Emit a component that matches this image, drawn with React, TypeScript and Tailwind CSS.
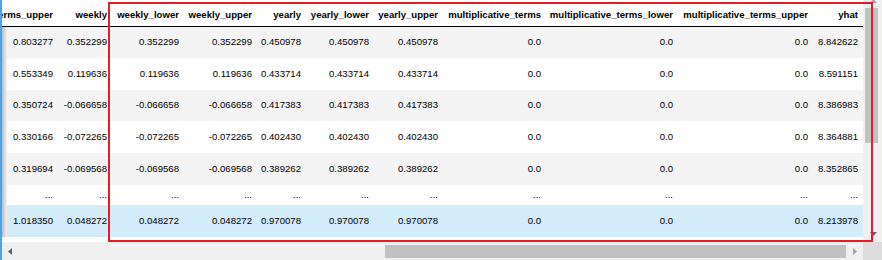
const columns = [
  { name: "additive_terms_upper", width: 58 },
  { name: "weekly", width: 54 },
  { name: "weekly_lower", width: 72 },
  { name: "weekly_upper", width: 73 },
  { name: "yearly", width: 49 },
  { name: "yearly_lower", width: 68 },
  { name: "yearly_upper", width: 69 },
  { name: "multiplicative_terms", width: 103 },
  { name: "multiplicative_terms_lower", width: 132 },
  { name: "multiplicative_terms_upper", width: 135 },
  { name: "yhat", width: 50 },
];

// [additive_upper, weekly(x3), yearly(x3), yhat]
const raw: [string, string, string, string, number, string][] = [
  ["0.803277", "0.352299", "0.450978", "8.842622", 31, "bg-[#f4f4f4]"],
  ["0.553349", "0.119636", "0.433714", "8.591151", 32, "bg-white"],
  ["0.350724", "-0.066658", "0.417383", "8.386983", 31, "bg-[#f4f4f4]"],
  ["0.330166", "-0.072265", "0.402430", "8.364881", 32, "bg-white"],
  ["0.319694", "-0.069568", "0.389262", "8.352865", 32, "bg-[#f4f4f4]"],
  ["...", "...", "...", "...", 20, "bg-white"],
  ["1.018350", "0.048272", "0.970078", "8.213978", 32, "bg-[#d3ecfa]"],
];

const rows = raw.map(([add, wk, yr, yhat, h, bg]) => {
  const zero = add === "..." ? "..." : "0.0";
  return { h, bg, cells: [add, wk, wk, wk, yr, yr, yr, zero, zero, zero, yhat] };
});

function Arrow({ dir, color }: { dir: "up" | "down" | "left" | "right"; color: string }) {
  const pts = {
    up: "0,4 7,4 3.5,0",
    down: "0,0 7,0 3.5,4",
    left: "4,0 4,7 0,3.5",
    right: "0,0 0,7 4,3.5",
  }[dir];
  const vertical = dir === "up" || dir === "down";
  return (
    <svg width={vertical ? 7 : 4} height={vertical ? 4 : 7} viewBox={vertical ? "0 0 7 4" : "0 0 4 7"}>
      <polygon points={pts} fill={color} />
    </svg>
  );
}

export default function App() {
  return (
    <div className="relative w-[882px] h-[260px] overflow-hidden bg-white text-black font-['Liberation_Sans',Arial,sans-serif] text-[9.6px]">
      <div className="flex h-[242px]">
        {/* table viewport */}
        <div className="w-[863px] overflow-hidden">
          <table className="table-fixed border-separate border-spacing-0 w-[863px]">
            <colgroup>
              {columns.map((c) => (
                <col key={c.name} style={{ width: c.width }} />
              ))}
            </colgroup>
            <thead>
              <tr>
                {columns.map((c) => (
                  <th
                    key={c.name}
                    className="h-[27px] pt-[4px] pr-[5px] border-b border-black font-bold text-right align-middle whitespace-nowrap"
                  >
                    <div className="flex justify-end overflow-hidden">{c.name}</div>
                  </th>
                ))}
              </tr>
            </thead>
            <tbody>
              {rows.map((r, i) => (
                <tr key={i} className={r.bg} style={{ height: r.h }}>
                  {r.cells.map((v, j) => (
                    <td key={j} className="pr-[5px] text-right align-middle whitespace-nowrap">
                      {v}
                    </td>
                  ))}
                </tr>
              ))}
            </tbody>
          </table>
        </div>

        {/* vertical scrollbar */}
        <div className="w-[19px] bg-[#f0f0f0] flex flex-col">
          <div className="h-[3px] overflow-hidden flex items-end justify-center pl-[1px]">
            <Arrow dir="up" color="#a3a3a3" />
          </div>
          <div className="mt-[5px] ml-[2px] w-[13px] h-[135px] bg-[#c1c1c1]" />
          <div className="flex-1" />
          <div className="h-[17px] flex items-center justify-center pl-[1px]">
            <Arrow dir="down" color="#606060" />
          </div>
        </div>
      </div>

      {/* horizontal scrollbar */}
      <div className="flex h-[18px] bg-[#f0f0f0]">
        <div className="w-[19px] flex items-center justify-center">
          <Arrow dir="left" color="#606060" />
        </div>
        <div className="flex-1 pt-[3px] pb-[2px] pl-[366px]">
          <div className="h-full bg-[#c1c1c1]" />
        </div>
        <div className="w-[17px] flex items-center justify-center">
          <Arrow dir="right" color="#a3a3a3" />
        </div>
        <div className="w-[19px] bg-[#dcdcdc]" />
      </div>

      {/* cell selection marker on the left */}
      <div className="absolute left-0 top-0 w-[2px] h-[260px] bg-[#42a5f5]" />
      <div className="absolute left-[2px] top-[27px] w-[5px] h-[210px] bg-gradient-to-r from-[#bdbdbd] to-[#f2f2f2]" />

      {/* red highlight box */}
      <div className="absolute left-[108px] top-[2px] w-[765px] h-[240px] border-2 border-[#e81c24] pointer-events-none" />
    </div>
  );
}
